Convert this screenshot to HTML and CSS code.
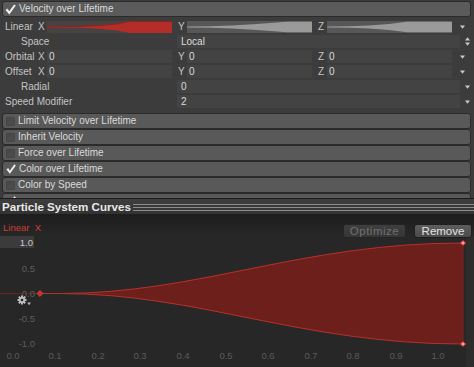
FILE: index.html
```html
<!DOCTYPE html>
<html>
<head>
<meta charset="utf-8">
<title>Particle System</title>
<link rel="stylesheet" href="styles.css">
</head>
<body>
<div class="inspector">
  <div class="mod head">
    <svg class="check" viewBox="0 0 11 11"><polygon points="0.5,6 2.4,4.5 4.2,7.3 9.2,0.4 10.8,1.6 4.3,10.6"/></svg>
    <span class="mod-name">Velocity over Lifetime</span>
  </div>
  <div class="props">
    <div class="prop">
      <span class="lbl">Linear</span>
      <div class="comp"><span class="ax">X</span>
        <svg class="swatch swatch-red" viewBox="0 0 125 12" preserveAspectRatio="none"><polygon points="0,5.6 33,5.2 55,4 70,2.5 83,0 125,0 125,12 83,12 70,9.5 55,8 33,6.8 0,6.4"/><polyline points="0,5.8 33,5.4 55,4.3 70,2.9 83,0.6 125,0.6"/></svg>
      </div>
      <div class="comp"><span class="ax">Y</span>
        <svg class="swatch swatch-gray" viewBox="0 0 125 12" preserveAspectRatio="none"><polygon points="0,5.6 23,5.3 45,4.6 70,3 100,0.8 125,0.8 125,11.2 100,11.2 70,9 45,7.4 23,6.7 0,6.4"/></svg>
      </div>
      <div class="comp"><span class="ax">Z</span>
        <svg class="swatch swatch-gray" viewBox="0 0 125 12" preserveAspectRatio="none"><polygon points="0,5.6 22,5.3 42,4.6 62,3 80,0.8 125,0.8 125,11.2 80,11.2 62,9 42,7.4 22,6.7 0,6.4"/></svg>
      </div>
      <span class="arrow"><svg viewBox="0 0 5 4"><polygon points="0,0.5 5,0.5 2.5,3.8"/></svg></span>
    </div>
    <div class="prop">
      <span class="lbl wide indent">Space</span>
      <div class="fld wide">Local</div>
      <span class="arrow"><svg viewBox="0 0 5 9"><polygon points="0,3.5 5,3.5 2.5,0.3"/><polygon points="0,5.5 5,5.5 2.5,8.7"/></svg></span>
    </div>
    <div class="prop">
      <span class="lbl">Orbital</span>
      <div class="comp"><span class="ax">X</span><div class="fld">0</div></div>
      <div class="comp"><span class="ax">Y</span><div class="fld">0</div></div>
      <div class="comp"><span class="ax">Z</span><div class="fld">0</div></div>
      <span class="arrow"><svg viewBox="0 0 5 4"><polygon points="0,0.5 5,0.5 2.5,3.8"/></svg></span>
    </div>
    <div class="prop">
      <span class="lbl">Offset</span>
      <div class="comp"><span class="ax">X</span><div class="fld">0</div></div>
      <div class="comp"><span class="ax">Y</span><div class="fld">0</div></div>
      <div class="comp"><span class="ax">Z</span><div class="fld">0</div></div>
      <span class="arrow"><svg viewBox="0 0 5 4"><polygon points="0,0.5 5,0.5 2.5,3.8"/></svg></span>
    </div>
    <div class="prop">
      <span class="lbl wide indent">Radial</span>
      <div class="fld wide">0</div>
      <span class="arrow"><svg viewBox="0 0 5 4"><polygon points="0,0.5 5,0.5 2.5,3.8"/></svg></span>
    </div>
    <div class="prop">
      <span class="lbl wide">Speed Modifier</span>
      <div class="fld wide">2</div>
      <span class="arrow"><svg viewBox="0 0 5 4"><polygon points="0,0.5 5,0.5 2.5,3.8"/></svg></span>
    </div>
  </div>
  <div class="mod"><span class="box"></span><span class="mod-name">Limit Velocity over Lifetime</span></div>
  <div class="mod"><span class="box"></span><span class="mod-name">Inherit Velocity</span></div>
  <div class="mod"><span class="box"></span><span class="mod-name">Force over Lifetime</span></div>
  <div class="mod"><svg class="check" viewBox="0 0 11 11"><polygon points="0.5,6 2.4,4.5 4.2,7.3 9.2,0.4 10.8,1.6 4.3,10.6"/></svg><span class="mod-name">Color over Lifetime</span></div>
  <div class="mod"><span class="box"></span><span class="mod-name">Color by Speed</span></div>
  <div class="mod"><svg class="check" viewBox="0 0 11 11"><polygon points="0.5,6 2.4,4.5 4.2,7.3 9.2,0.4 10.8,1.6 4.3,10.6"/></svg></div>
</div>

<div class="curves-title"><span>Particle System Curves</span><span class="grip"></span></div>

<div class="curve-editor">
  <svg class="graph" viewBox="0 214 474 153" width="474" height="153">
    <defs>
      <linearGradient id="topband" x1="0" y1="0" x2="0" y2="1">
        <stop offset="0" stop-color="#1d1d1d"/>
        <stop offset="1" stop-color="#272727"/>
      </linearGradient>
    </defs>
    <rect x="0" y="214" width="474" height="153" fill="#272727"/>
    <rect x="0" y="214" width="474" height="22" fill="url(#topband)"/>
    <rect x="466" y="236" width="8" height="131" fill="#2c2c2c"/>
    <line x1="0" y1="293.5" x2="40" y2="293.5" class="flat"/>
    <path class="fill" d="M40,293.5 L60,293.5 C200,293.5 300,243 463,243 L463,344 C300,344 200,293.5 60,293.5 Z"/>
    <path class="edge" d="M40,293.5 L60,293.5 C200,293.5 300,243 463,243"/>
    <path class="edge" d="M60,293.5 C200,293.5 300,344 463,344"/>
    <line x1="463" y1="243" x2="463" y2="344" class="edge-v"/>
    <rect x="0" y="236" width="34" height="12" fill="#3b3b3b"/>
    <text x="33" y="246" class="ylab hi">1.0</text>
    <text x="35" y="271.5" class="ylab">0.5</text>
    <text x="35" y="296.5" class="ylab">0.0</text>
    <text x="35" y="322" class="ylab">-0.5</text>
    <text x="35" y="347" class="ylab">-1.0</text>
    <g class="xlab">
      <text x="13" y="359">0.0</text>
      <text x="55" y="359">0.1</text>
      <text x="98" y="359">0.2</text>
      <text x="140" y="359">0.3</text>
      <text x="183" y="359">0.4</text>
      <text x="226" y="359">0.5</text>
      <text x="268" y="359">0.6</text>
      <text x="311" y="359">0.7</text>
      <text x="353" y="359">0.8</text>
      <text x="396" y="359">0.9</text>
      <text x="438" y="359">1.0</text>
    </g>
    <polygon class="key" points="40,290.6 42.9,293.5 40,296.4 37.1,293.5"/>
    <polygon class="key2" points="463,240.4 465.6,243 463,245.6 460.4,243"/>
    <polygon class="key2" points="463,341.4 465.6,344 463,346.6 460.4,344"/>
    <g class="gear" transform="translate(22 300)">
      <circle r="3.1"/>
      <rect x="-1" y="-4.5" width="2" height="9"/>
      <rect x="-1" y="-4.5" width="2" height="9" transform="rotate(45)"/>
      <rect x="-1" y="-4.5" width="2" height="9" transform="rotate(90)"/>
      <rect x="-1" y="-4.5" width="2" height="9" transform="rotate(135)"/>
      <circle r="1.3" class="hole"/>
    </g>
    <polygon class="gear-tri" points="27.3,302.6 30.9,302.6 29.1,305.2"/>
  </svg>
  <div class="ce-toolbar">
    <span class="curve-name">Linear&nbsp; X</span>
    <span class="spacer"></span>
    <span class="btn disabled">Optimize</span>
    <span class="btn">Remove</span>
  </div>
</div>
</body>
</html>
```
FILE: styles.css
```css
html, body {
  margin: 0;
  padding: 0;
}
body {
  width: 474px;
  height: 367px;
  overflow: hidden;
  background: #3c3c3c;
  font-family: "Liberation Sans", Arial, sans-serif;
  font-size: 10px;
  color: #c6c6c6;
}

.inspector {
  height: 198px;
  overflow: hidden;
  padding: 1px 3px 0 2px;
  border-bottom: 1px solid #1c1c1c;
  box-sizing: border-box;
  height: 199px;
}

.mod {
  box-sizing: border-box;
  height: 16px;
  border: 1px solid #2b2b2b;
  border-radius: 3px;
  background: #595959;
  display: flex;
  align-items: center;
  gap: 3px;
  padding-left: 3px;
  color: #dadada;
  white-space: nowrap;
}
.mod.head {
  padding-left: 2px;
  gap: 3px;
  background: #5b5b5b;
}
.check {
  width: 10px;
  height: 10px;
  fill: #f2f2f2;
  flex: none;
}
.mod.head .check {
  width: 11px;
  height: 11px;
}
.box {
  width: 9px;
  height: 9px;
  border-radius: 2px;
  background: #4b4b4b;
  box-shadow: inset 0 0 0 1px #464646;
  flex: none;
}
.mod-name {
  line-height: 14px;
}

.props {
  padding: 2px 0 4px;
}
.prop {
  display: flex;
  align-items: center;
  height: 15px;
  padding-left: 3px;
  white-space: nowrap;
}
.lbl {
  width: 33px;
  flex: none;
  color: #c4c4c4;
}
.lbl.wide {
  width: 172px;
}
.lbl.indent {
  box-sizing: border-box;
  padding-left: 16px;
}
.comp {
  display: flex;
  align-items: center;
  width: 140px;
  flex: none;
}
.ax {
  width: 9px;
  flex: none;
  color: #c4c4c4;
}
.fld {
  box-sizing: border-box;
  width: 125px;
  height: 13px;
  line-height: 13px;
  background: #434343;
  color: #dcdcdc;
  padding-left: 2px;
}
.fld.wide {
  width: auto;
  flex: 1;
  margin-right: 3px;
  padding-left: 4px;
}
.swatch {
  width: 125px;
  height: 12px;
  display: block;
  flex: none;
}
.swatch-red {
  background: #484343;
}
.swatch-red polygon {
  fill: #b52d28;
}
.swatch-red polyline {
  fill: none;
  stroke: #8a2420;
  stroke-width: 1;
}
.swatch-gray {
  background: #575757;
}
.swatch-gray polygon {
  fill: #9a9a9a;
}
.arrow {
  width: 8px;
  flex: none;
  display: flex;
  justify-content: center;
  align-items: center;
}
.arrow svg {
  width: 5px;
  height: 4px;
  fill: #c8c8c8;
}
.arrow svg[viewBox="0 0 5 9"] {
  height: 9px;
}

.curves-title {
  height: 15px;
  display: flex;
  align-items: center;
  gap: 2px;
  padding-left: 2px;
  background: linear-gradient(#3e3e3e, #323232);
  font-weight: bold;
  font-size: 11.6px;
  color: #e8e8e8;
  white-space: nowrap;
}
.grip {
  flex: 1;
  height: 7px;
  box-sizing: border-box;
  border-top: 1px solid #8c8c8c;
  border-bottom: 1px solid #8c8c8c;
  background: linear-gradient(transparent 2px, #8c8c8c 2px, #8c8c8c 3px, transparent 3px);
  margin-top: 1px;
}

.curve-editor {
  position: relative;
  height: 153px;
  background: #272727;
}
.graph {
  display: block;
}
.graph .flat {
  stroke: #6a2420;
  stroke-width: 1;
}
.graph .fill {
  fill: #6d1f1b;
}
.graph .edge {
  fill: none;
  stroke: #b8302a;
  stroke-width: 1;
}
.graph .edge-v {
  stroke: #7a2420;
  stroke-width: 1;
}
.graph text {
  font-family: "Liberation Sans", Arial, sans-serif;
  font-size: 9.5px;
}
.graph .ylab {
  text-anchor: end;
  fill: #5e5e5e;
}
.graph .ylab.hi {
  fill: #c8c8c8;
}
.graph .xlab text {
  text-anchor: middle;
  fill: #5a5a5a;
}
.graph .key {
  fill: #d42626;
  stroke: #f06060;
  stroke-width: 0.6;
}
.graph .key2 {
  fill: #f0a0a0;
  stroke: #d02020;
  stroke-width: 1;
}
.graph .gear {
  fill: #bdbdbd;
}
.graph .gear .hole {
  fill: #272727;
}
.graph .gear-tri {
  fill: #bdbdbd;
}

.ce-toolbar {
  position: absolute;
  top: 0;
  left: 0;
  right: 0;
  display: flex;
  align-items: flex-start;
  padding: 9px 2px 0 3px;
}
.curve-name {
  color: #d23a35;
  font-size: 9.5px;
  line-height: 10px;
  white-space: nowrap;
}
.spacer {
  flex: 1;
}
.btn {
  box-sizing: border-box;
  height: 14px;
  line-height: 13px;
  margin-top: 1px;
  border: 1px solid #1e1e1e;
  border-radius: 3px;
  background: linear-gradient(#5e5e5e, #4a4a4a);
  color: #e2e2e2;
  font-size: 11.5px;
  text-align: center;
  width: 58px;
}
.btn.disabled {
  width: 63px;
  margin-right: 8px;
  background: linear-gradient(#3e3e3e, #363636);
  color: #707070;
  letter-spacing: 0.5px;
  border-color: #252525;
}
```
